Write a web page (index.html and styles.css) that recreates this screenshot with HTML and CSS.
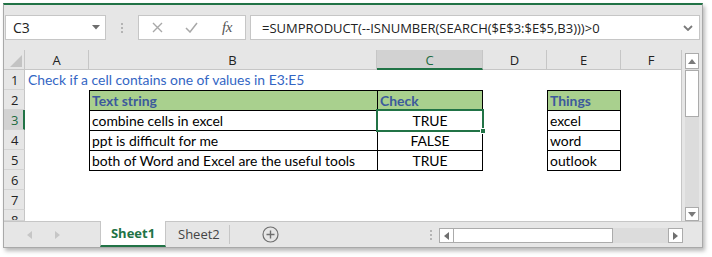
FILE: index.html
```html
<!DOCTYPE html>
<html>
<head>
<meta charset="utf-8">
<link rel="stylesheet" href="styles.css">
</head>
<body>
<div class="window">
  <div class="fbar">
    <div class="namebox"><span>C3</span><svg class="caret" width="8" height="5" viewBox="0 0 8 5"><path d="M0 0h8L4 4.5z" fill="#6d6d6d"/></svg></div>
    <div class="grip"><i></i><i></i><i></i></div>
    <div class="fxbox">
      <svg class="ico-x" width="11" height="11" viewBox="0 0 11 11"><path d="M1 1l9 9M10 1l-9 9" stroke="#a8a8a8" stroke-width="1.4" fill="none"/></svg>
      <svg class="ico-ok" width="13" height="11" viewBox="0 0 13 11"><path d="M1 6l4 4 7-9" stroke="#a8a8a8" stroke-width="1.5" fill="none"/></svg>
      <span class="fx">fx</span>
    </div>
    <div class="formula"><span>=SUMPRODUCT(--ISNUMBER(SEARCH($E$3:$E$5,B3)))&gt;0</span><svg width="10" height="6" viewBox="0 0 10 6"><path d="M1 1l4 4 4-4" stroke="#7a7a7a" stroke-width="1.8" fill="none"/></svg></div>
  </div>
  <div class="sheet">
    <div class="cells">
      <div class="corner"><svg width="12" height="12" viewBox="0 0 12 12"><path d="M12 0v12H0z" fill="#c3c3c3"/></svg></div>
      <div class="ch">A</div><div class="ch">B</div><div class="ch sel">C</div><div class="ch">D</div><div class="ch">E</div><div class="ch">F</div>

      <div class="rh">1</div><div class="c title">Check if a cell contains one of values in E3:E5</div><div class="c"></div><div class="c"></div><div class="c"></div><div class="c"></div><div class="c"></div>

      <div class="rh">2</div><div class="c"></div><div class="c t th">Text string</div><div class="c t th r">Check</div><div class="c"></div><div class="c t th r">Things</div><div class="c"></div>

      <div class="rh sel">3</div><div class="c"></div><div class="c t">combine cells in excel</div><div class="c t r mid active">TRUE<span class="selbox"><span class="handle"></span></span></div><div class="c"></div><div class="c t r">excel</div><div class="c"></div>

      <div class="rh">4</div><div class="c"></div><div class="c t">ppt is difficult for me</div><div class="c t r mid">FALSE</div><div class="c"></div><div class="c t r">word</div><div class="c"></div>

      <div class="rh">5</div><div class="c"></div><div class="c t">both of Word and Excel are the useful tools</div><div class="c t r mid">TRUE</div><div class="c"></div><div class="c t r">outlook</div><div class="c"></div>

      <div class="rh">6</div><div class="c"></div><div class="c tb"></div><div class="c tb"></div><div class="c"></div><div class="c tb"></div><div class="c"></div>

      <div class="rh">7</div><div class="c"></div><div class="c"></div><div class="c"></div><div class="c"></div><div class="c"></div><div class="c"></div>

      <div class="rh">8</div><div class="c"></div><div class="c"></div><div class="c"></div><div class="c"></div><div class="c"></div><div class="c"></div>
    </div>
    <div class="vscroll">
      <div class="vtrack">
        <div class="sbtn up"><svg width="8" height="5" viewBox="0 0 8 5"><path d="M0 5h8L4 0z" fill="#7a7a7a"/></svg></div>
        <div class="vthumb"></div>
        <div class="vfill"></div>
        <div class="sbtn down"><svg width="8" height="5" viewBox="0 0 8 5"><path d="M0 0h8L4 5z" fill="#7a7a7a"/></svg></div>
      </div>
    </div>
  </div>
  <div class="tabbar">
    <div class="nav">
      <svg width="5" height="8" viewBox="0 0 5 8"><path d="M5 0v8L0 4z" fill="#c6c6c6"/></svg>
      <svg width="5" height="8" viewBox="0 0 5 8"><path d="M0 0v8l5-4z" fill="#c6c6c6"/></svg>
    </div>
    <div class="tab active">Sheet1</div>
    <div class="tab">Sheet2</div>
    <div class="tabsep"></div>
    <div class="addsheet"><svg width="17" height="17" viewBox="0 0 17 17"><circle cx="8.5" cy="8.5" r="7.5" stroke="#6f6f6f" stroke-width="1.2" fill="none"/><path d="M8.5 4.5v8M4.5 8.5h8" stroke="#6f6f6f" stroke-width="1.4"/></svg></div>
    <div class="spacer"></div>
    <div class="hgrip"><i></i><i></i><i></i></div>
    <div class="hscroll">
      <div class="sbtn hb"><svg width="5" height="8" viewBox="0 0 5 8"><path d="M5 0v8L0 4z" fill="#6f6f6f"/></svg></div>
      <div class="hthumb"></div>
      <div class="hfill"></div>
      <div class="sbtn hb"><svg width="5" height="8" viewBox="0 0 5 8"><path d="M0 0v8l5-4z" fill="#6f6f6f"/></svg></div>
    </div>
  </div>
</div>
</body>
</html>
```
FILE: styles.css
```css
* { box-sizing: border-box; margin: 0; padding: 0; }
body { background: #fff; width: 712px; height: 257px; overflow: hidden; }

.window {
  margin: 3px 0 0 3px;
  width: 700px;
  border: 1px solid #a9a9a9;
  border-top: 2px solid #217346;
  box-shadow: 2px 3px 4px rgba(0,0,0,0.28);
  background: #e6e6e6;
  display: flex;
  flex-direction: column;
}

/* formula bar */
.fbar { height: 45px; display: flex; align-items: flex-start; padding: 10px 0 0 1px; }
.namebox {
  width: 101px; height: 25px; background: #fff; border: 1px solid #c6c6c6;
  display: flex; align-items: center; justify-content: space-between;
  padding: 0 5px 0 7px; font: 14px "Open Sans", sans-serif; color: #222;
}
.grip { width: 32px; height: 25px; display: flex; flex-direction: column; align-items: center; justify-content: center; gap: 2px; }
.grip i, .hgrip i { display: block; width: 2px; height: 2px; background: #b4b4b4; }
.fxbox {
  width: 108px; height: 25px; background: #fff; border: 1px solid #c6c6c6;
  display: flex; align-items: center; padding-left: 13px;
}
.ico-x { margin-right: 22px; }
.ico-ok { margin-right: 24px; }
.fx { font: italic 15px "Liberation Serif", serif; color: #555; letter-spacing: -0.5px; }
.formula {
  width: 450px; height: 25px; margin-left: 4px; background: #fff; border: 1px solid #c6c6c6;
  display: flex; align-items: center; justify-content: space-between; padding: 0 6px 0 11px;
  font: 13px "Open Sans", sans-serif; color: #222;
}

/* sheet grid */
.sheet { height: 171px; display: flex; background: #fff; }
.cells {
  width: 678px; display: grid;
  grid-template-columns: 21px 64px 288px 106px 64px 74px 61px;
  grid-template-rows: 20px repeat(7, 20px) 11px;
  overflow: hidden; border-right: 1px solid #c6c6c6;
  font: 13.9px Lato, sans-serif; color: #000;
}
.corner { background: #e6e6e6; border-right: 1px solid #c6c6c6; border-bottom: 1px solid #c6c6c6; display: flex; align-items: flex-end; justify-content: flex-end; padding: 0 2px 2px 0; }
.ch {
  background: #e6e6e6; border-right: 1px solid #c6c6c6; border-bottom: 1px solid #c6c6c6;
  text-align: center; font: 13px "Open Sans", sans-serif; line-height: 20px; color: #222;
}
.ch.sel { background: #d2d2d2; border-bottom: 2px solid #217346; color: #1d6b3f; }
.rh {
  background: #e6e6e6; border-right: 1px solid #c6c6c6; border-bottom: 1px solid #d4d4d4;
  font: 13px "Open Sans", sans-serif; line-height: 20px; padding-left: 7px; color: #222; overflow: hidden;
}
.rh.sel { background: #d2d2d2; border-right: 2px solid #217346; color: #1d6b3f; }
.c { line-height: 20px; white-space: nowrap; padding-left: 3px; }
.c.title { color: #3366c4; overflow: visible; }
.c.t { border-top: 1px solid #000; border-left: 1px solid #000; line-height: 19px; padding-left: 2px; }
.c.r { border-right: 1px solid #000; }
.c.th { background: #a9d08e; font-weight: bold; color: #3c5a9c; }
.c.mid { text-align: center; padding-left: 0; }
.c.tb { border-top: 1px solid #000; }
.active { position: relative; }
.selbox { position: absolute; left: -2px; top: -2px; right: -2px; bottom: -2px; border: 2px solid #217346; }
.handle { position: absolute; right: -4px; bottom: -4px; width: 6px; height: 6px; background: #217346; border: 1px solid #fff; }

/* vertical scrollbar */
.vscroll { width: 20px; background: #e6e6e6; padding: 3px 2px 0 3px; display: flex; }
.vtrack { width: 14px; background: #dcdcdc; display: flex; flex-direction: column; }
.sbtn { background: #fff; border: 1px solid #ababab; display: flex; align-items: center; justify-content: center; }
.sbtn.up { height: 16px; }
.sbtn.down { height: 14px; }
.vthumb { height: 47px; margin-top: 1px; background: #fff; border: 1px solid #ababab; }
.vfill { flex: 1; }

/* tab bar */
.tabbar {
  height: 26px; border-top: 1px solid #c6c6c6; display: flex; align-items: stretch;
  font: 13px "Open Sans", sans-serif; color: #444;
}
.nav { width: 96px; display: flex; align-items: center; padding-left: 23px; gap: 23px; }
.tab { width: 63px; line-height: 24px; padding-left: 12px; }
.tab.active {
  width: 66px; padding-left: 0; text-align: center; background: #fff;
  border-left: 1px solid #c6c6c6; border-right: 1px solid #c6c6c6; border-bottom: 2px solid #217346;
  font-weight: bold; color: #217346; margin-top: -1px;
}
.tabsep { width: 1px; background: #c6c6c6; margin: 3px 0 3px; }
.addsheet { display: flex; align-items: center; margin-left: 32px; }
.spacer { flex: 1; }
.hgrip { width: 16px; display: flex; flex-direction: column; align-items: center; justify-content: center; gap: 2px; margin-right: 0; }
.hscroll { width: 244px; height: 15px; margin: 6px 19px 0 0; background: #dcdcdc; display: flex; }
.sbtn.hb { width: 15px; }
.hthumb { width: 159px; background: #fff; border: 1px solid #ababab; border-left: none; }
.hfill { flex: 1; }
```
